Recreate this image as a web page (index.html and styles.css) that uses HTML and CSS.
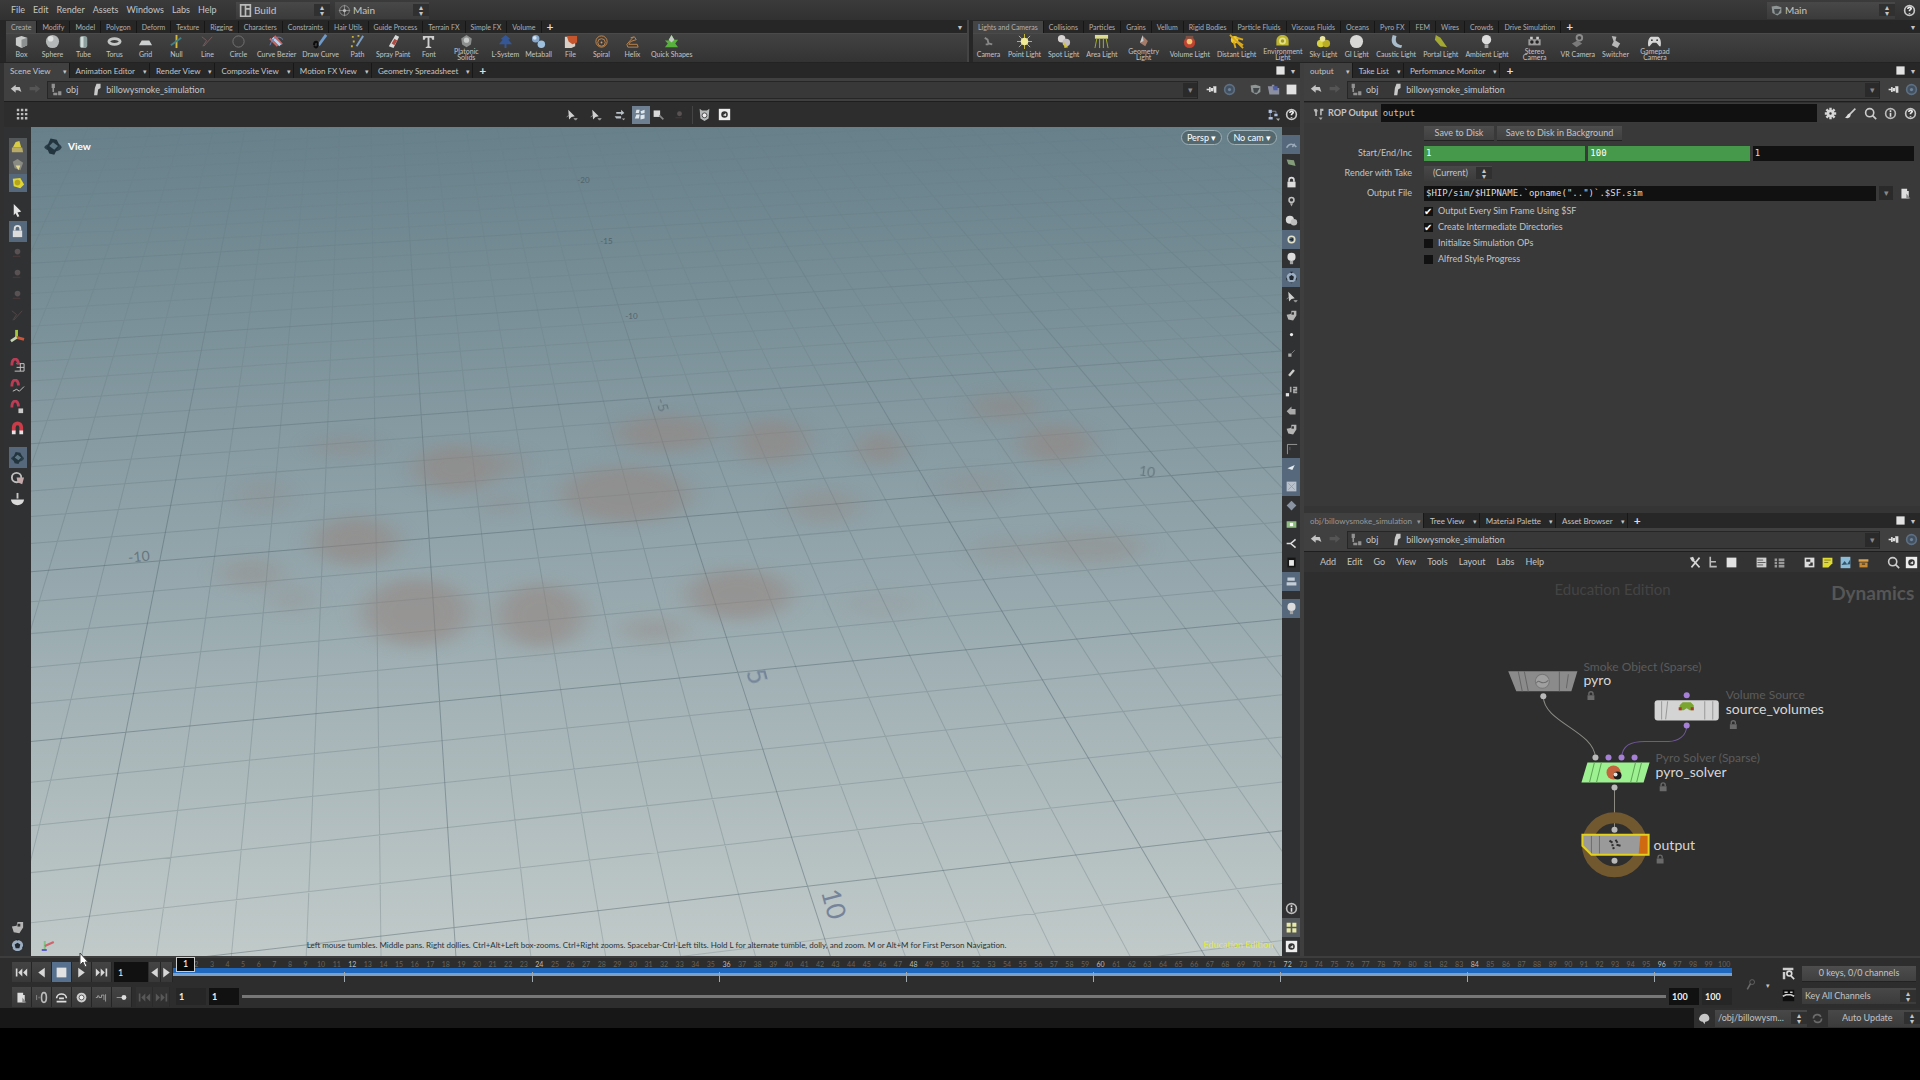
FILE: index.html
```html
<!DOCTYPE html>
<html lang="en">
<head>
    <meta charset="UTF-8">
    <title>billowysmoke_simulation</title>
    <link rel="stylesheet" href="styles.css">
</head>
<body>
    <svg class="sprite" aria-hidden="true">
        <symbol id="box" viewBox="0 0 16 16"><path d="M2 4l6-2 6 2v8l-6 3-6-3z" fill="#c9cbcb"/><path d="M8 6l6-2v8l-6 3z" fill="#8c9090"/></symbol>
        <symbol id="sphere" viewBox="0 0 16 16"><circle cx="8" cy="8" r="7" fill="#b4b8b8"/><circle cx="6" cy="5" r="3" fill="#dfe1e1"/></symbol>
        <symbol id="tube" viewBox="0 0 16 16"><rect x="4" y="2" width="8" height="13" rx="3" fill="#8ea09d"/><rect x="5" y="3" width="3" height="11" fill="#d2dcda"/></symbol>
        <symbol id="torus" viewBox="0 0 16 16"><ellipse cx="8" cy="8" rx="6" ry="3" fill="none" stroke="#c3c5c5" stroke-width="3"/></symbol>
        <symbol id="grid" viewBox="0 0 16 16"><path d="M4 7h8l3 5H1z" fill="#cdd0d0"/></symbol>
        <symbol id="null" viewBox="0 0 16 16"><path d="M8 1v14" stroke="#d5b73a" stroke-width="2"/><path d="M2 12l11-8" stroke="#3e8188" stroke-width="2"/></symbol>
        <symbol id="line" viewBox="0 0 16 16"><path d="M2 3l5 4-4 6M13 3L4 13" fill="none" stroke="#7b5c5c"/></symbol>
        <symbol id="circle" viewBox="0 0 16 16"><circle cx="8" cy="8" r="6" fill="none" stroke="#747474"/></symbol>
        <symbol id="curve" viewBox="0 0 16 16"><path d="M1 5l8 8M6 2l8 9" stroke="#c96565" stroke-width="2"/><path d="M4 4l8 8" stroke="#bccfe8" stroke-width="3"/><path d="M1 12c3-9 10-11 14-6" fill="none" stroke="#6a84c0"/></symbol>
        <symbol id="draw" viewBox="0 0 16 16"><path d="M14 1L6 12" stroke="#6f9ac9" stroke-width="3"/><path d="M1 12c0-5 5-5 4 0-1 4-3 2-4 1" fill="none" stroke="#0c0c0c" stroke-width="2"/></symbol>
        <symbol id="path" viewBox="0 0 16 16"><path d="M14 2L7 13" stroke="#7f9fc2" stroke-width="2"/><path d="M2 2h2v2H2zM8 1h2v2H8zM3 7h2v2H3zM1 12h2v2H1z" fill="#c8b03c"/></symbol>
        <symbol id="spray" viewBox="0 0 16 16"><path d="M10 1l4 2-6 12-5-2z" fill="#d8dada"/><path d="M9 5l3 2-3 5-3-2z" fill="#b04a42"/></symbol>
        <symbol id="font" viewBox="0 0 16 16"><path d="M2 2h12v4h-2l-1-2H9v9l2 1v1H5v-1l2-1V4H5L4 6H2z" fill="#cfcfcf"/></symbol>
        <symbol id="solids" viewBox="0 0 16 16"><path d="M8 1l6 4-1 7-5 3-5-3-1-7z" fill="#8d8f8f"/><circle cx="8" cy="7" r="3" fill="#c8caca"/></symbol>
        <symbol id="lsystem" viewBox="0 0 16 16"><path d="M8 1l5 4-2 1 4 5H9v4H7v-4H1l4-5-2-1z" fill="#365796"/></symbol>
        <symbol id="meta" viewBox="0 0 16 16"><circle cx="5" cy="5" r="4" fill="#86a7ca"/><circle cx="11" cy="11" r="4" fill="#9ec0dd"/><circle cx="4" cy="4" r="2" fill="#d2e2f0"/></symbol>
        <symbol id="file" viewBox="0 0 16 16"><path d="M2 3h11v10l-4 2H2z" fill="#d8cfc6"/><path d="M4 2h11v7l-5 2-4-3z" fill="#c4552d"/></symbol>
        <symbol id="spiral" viewBox="0 0 16 16"><circle cx="8" cy="8" r="6" fill="none" stroke="#c48a50"/><circle cx="8" cy="9" r="4" fill="none" stroke="#c48a50"/><circle cx="8" cy="9" r="1" fill="#dc9e62"/></symbol>
        <symbol id="helix" viewBox="0 0 16 16"><path d="M6 4l4-1 2 3-6 2-2 3h9l1 3H3l-1-3 7-8" fill="none" stroke="#c0864c"/></symbol>
        <symbol id="quick" viewBox="0 0 16 16"><path d="M8 1l3 5h4l-3 4 3 4H1l3-4-3-3h4z" fill="#58b13c"/><path d="M8 1l3 5-3 3-3-3z" fill="#c2c8c2"/></symbol>
        <symbol id="cam" viewBox="0 0 16 16"><path d="M4 4l3 2 1 4 4 1M5 11h3" fill="none" stroke="#888" stroke-width="2"/></symbol>
        <symbol id="sun" viewBox="0 0 16 16"><path d="M8 0v16M0 8h16M2 2l12 12M14 2L2 14" stroke="#c5bb3a"/><circle cx="8" cy="8" r="4" fill="#f0eb94"/></symbol>
        <symbol id="spot" viewBox="0 0 16 16"><circle cx="6" cy="5" r="4" fill="#d9d4d4"/><circle cx="11" cy="9" r="4" fill="#c3bcc0"/><path d="M8 8l5 6-4 1z" fill="#d3c23e"/></symbol>
        <symbol id="area" viewBox="0 0 16 16"><path d="M1 1h14v4H1z" fill="#dcdc90"/><path d="M3 5L1 15M6 5v10M10 5v10M13 5l2 10" stroke="#a6b32e"/></symbol>
        <symbol id="geo" viewBox="0 0 16 16"><path d="M7 2l6 6-3 6-6-4z" fill="#a47b69"/><path d="M7 1l-3 9 4-2z" fill="#c7cacc"/></symbol>
        <symbol id="vol" viewBox="0 0 16 16"><circle cx="8" cy="9" r="6" fill="#bf4332"/><circle cx="8" cy="8" r="3" fill="#f0c470"/><path d="M4 2h8v3H4z" fill="#7c5345"/></symbol>
        <symbol id="distant" viewBox="0 0 16 16"><circle cx="6" cy="6" r="4" fill="#edcb2c"/><path d="M1 1l14 14M8 4l7 2M5 8l2 7M9 8l6 4" stroke="#d8a91e" stroke-width="2"/></symbol>
        <symbol id="env" viewBox="0 0 16 16"><path d="M1 13V8c0-9 14-9 14 0v5z" fill="#bdb52f"/><circle cx="8" cy="8" r="4" fill="#e5e084"/><circle cx="8" cy="8" r="2" fill="#9a9427"/></symbol>
        <symbol id="sky" viewBox="0 0 16 16"><circle cx="5" cy="10" r="4" fill="#d8d23c"/><circle cx="11" cy="10" r="4" fill="#b9ad26"/><circle cx="7" cy="5" r="3" fill="#ece69d"/></symbol>
        <symbol id="gi" viewBox="0 0 16 16"><circle cx="8" cy="8" r="7" fill="#d8d8d6"/></symbol>
        <symbol id="caustic" viewBox="0 0 16 16"><path d="M4 1l4 1c-2 6 0 9 6 10l-1 3C4 14 1 9 4 1z" fill="#a9bccb"/></symbol>
        <symbol id="portal" viewBox="0 0 16 16"><path d="M3 1l5 3 7 10-7-1-6-7z" fill="#a3a932"/></symbol>
        <symbol id="bulb" viewBox="0 0 16 16"><circle cx="8" cy="6" r="5" fill="#dcdcdc"/><path d="M6 11h4v4H6z" fill="#a5a5a5"/></symbol>
        <symbol id="stereo" viewBox="0 0 16 16"><path d="M1 6h14v7H1z" fill="#9d9d9d"/><path d="M3 3h3v3H3zM10 3h3v3h-3z" fill="#ccc"/><circle cx="5" cy="9" r="2" fill="#222"/><circle cx="11" cy="9" r="2" fill="#222"/></symbol>
        <symbol id="vr" viewBox="0 0 16 16"><circle cx="10" cy="4" r="3" fill="none" stroke="#8c8c8c" stroke-width="2"/><path d="M2 10l6-3 5 3-6 4z" fill="#7a7a7a"/></symbol>
        <symbol id="switcher" viewBox="0 0 16 16"><path d="M4 2l5 1-1 4 5 3-3 5-6-3 2-4z" fill="#b7b7b7"/></symbol>
        <symbol id="pad" viewBox="0 0 16 16"><path d="M4 3h8c3 1 4 7 3 11-2 1-3-3-5-4H6c-2 1-3 5-5 4C0 10 1 4 4 3z" fill="#d6d6d6"/><circle cx="5" cy="7" r="1" fill="#333"/><circle cx="11" cy="7" r="1" fill="#333"/></symbol>
        <symbol id="back" viewBox="0 0 16 16"><path d="M1 7l6-5v3h5l2 6-4-2H7v3z" fill="currentColor"/></symbol>
        <symbol id="fwd" viewBox="0 0 16 16"><path d="M15 7L9 2v3H2v4h7v3z" fill="currentColor"/></symbol>
        <symbol id="objnet" viewBox="0 0 16 16"><path d="M2 1h4v5H2zM3 6h2v5H3zM4 12h5v3H4zM10 10h4v5h-4z" fill="#929292"/></symbol>
        <symbol id="dop" viewBox="0 0 16 16"><path d="M8 1h5v5l-3 2-1 7H5l1-9z" fill="#c9c9c9"/></symbol>
        <symbol id="pin" viewBox="0 0 16 16"><path d="M2 8h4M6 5v6" stroke="#ddd" stroke-width="2"/><path d="M7 6h3v4H7zM10 4h4v8h-3z" fill="#ddd"/></symbol>
        <symbol id="ring" viewBox="0 0 16 16"><circle cx="8" cy="8" r="6" fill="#42505f" stroke="#5e7085" stroke-width="2"/><circle cx="8" cy="8" r="2" fill="#6e8299"/></symbol>
        <symbol id="cube" viewBox="0 0 16 16"><path d="M2 3l6-1 6 2v7l-5 3-6-3z" fill="#8f9595"/><path d="M5 6h8l-3 6H6z" fill="#42484a"/></symbol>
        <symbol id="cubeb" viewBox="0 0 16 16"><path d="M1 4h5V2h3v4h6v8H3z" fill="#8c8fa0"/><path d="M7 4h6v5H8z" fill="#4f5fa8"/></symbol>
        <symbol id="square" viewBox="0 0 16 16"><path d="M2 2h12v12H2z" fill="#e2e2e2"/></symbol>
        <symbol id="help" viewBox="0 0 16 16"><circle cx="8" cy="8" r="6" fill="none" stroke="#c8c8c8" stroke-width="2"/><path d="M6 6c0-3 5-2 4 0L8 8v1M8 11v1" fill="none" stroke="#eee" stroke-width="2"/></symbol>
        <symbol id="info" viewBox="0 0 16 16"><circle cx="8" cy="8" r="6" fill="none" stroke="#bbb" stroke-width="2"/><path d="M8 4v2M8 7v5" stroke="#ddd" stroke-width="2"/></symbol>
        <symbol id="gear" viewBox="0 0 16 16"><path d="M8 1v14M1 8h14M3 3l10 10M13 3L3 13" stroke="#d6d6d6" stroke-width="3"/><circle cx="8" cy="8" r="3" fill="#333" stroke="#d6d6d6" stroke-width="3"/></symbol>
        <symbol id="brush" viewBox="0 0 16 16"><path d="M14 2L7 9" stroke="#ccc" stroke-width="2"/><path d="M7 8c-3 0-3 4-6 5 4 2 8 0 7-4z" fill="#ddd"/></symbol>
        <symbol id="search" viewBox="0 0 16 16"><circle cx="7" cy="7" r="5" fill="none" stroke="#ccc" stroke-width="2"/><path d="M10 10l5 5" stroke="#ccc" stroke-width="2"/></symbol>
        <symbol id="dots" viewBox="0 0 16 16"><path d="M1 1h3v3H1zM6 1h3v3H6zM11 1h3v3h-3zM1 6h3v3H1zM6 6h3v3H6zM11 6h3v3h-3zM1 11h3v3H1zM6 11h3v3H6zM11 11h3v3h-3z" fill="#bdbdbd"/></symbol>
        <symbol id="pick" viewBox="0 0 16 16"><path d="M4 2l8 8-4 1-3 3z" fill="#d0d0d0"/><path d="M2 11l3-2M11 13h4l-2 2z" stroke="#999" fill="#999"/></symbol>
        <symbol id="swap" viewBox="0 0 16 16"><path d="M10 2l4 4-4 3V7H4V5h6zM2 10h8v3H4z" fill="#b8c0c8"/><path d="M11 13h4l-2 2z" fill="#aaa"/></symbol>
        <symbol id="geosel" viewBox="0 0 16 16"><path d="M3 2h4l-1 4H2zM8 4l5-2v4l-4 1zM3 8h4l-1 5H1zM8 9l5-1v5l-5 1z" fill="#dfe6ec"/></symbol>
        <symbol id="lens" viewBox="0 0 16 16"><path d="M2 3h8v8H2z" fill="#d8d8d8"/><path d="M9 9l5 5" stroke="#888" stroke-width="2"/></symbol>
        <symbol id="snap" viewBox="0 0 16 16"><path d="M2 1l3 2h6l3-2-1 12-5 3-5-3z" fill="#b5b8b8"/><circle cx="8" cy="9" r="3" fill="#eee" stroke="#333"/></symbol>
        <symbol id="cambox" viewBox="0 0 16 16"><path d="M1 1h14v14H1z" fill="#ededed"/><circle cx="8" cy="8" r="4" fill="#333"/><path d="M6 9l4-3v4z" fill="#ddd"/></symbol>
        <symbol id="nodes" viewBox="0 0 16 16"><path d="M2 2h4v4H2zM2 11h5v3H2zM9 7h4v3H9z" fill="#aebfe0"/><path d="M4 6v5M6 4h5v3" fill="none" stroke="#8490b0"/><path d="M11 13h5l-2 3z" fill="#aaa"/></symbol>
        <symbol id="rop" viewBox="0 0 16 16"><path d="M2 3l3-1 2 2-1 3v4H4V7zM10 2h4v3h-2v5h-2z" fill="#b8b8b8"/><path d="M8 13h5l-2 3z" fill="#aaa"/></symbol>
        <symbol id="objy" viewBox="0 0 16 16"><path d="M6 2l4-1 2 7H3z" fill="#d8cb45"/><path d="M2 8h11l1 5H2z" fill="#b8aa67"/></symbol>
        <symbol id="objg" viewBox="0 0 16 16"><path d="M3 4l5-3 6 4-3 8-6-2z" fill="#8a8b83"/><path d="M6 8h5l-2 5z" fill="#e1d98f"/></symbol>
        <symbol id="dyn" viewBox="0 0 16 16"><path d="M3 3l8-1 4 7-4 4-7-2z" fill="#e0d634"/><circle cx="8" cy="7" r="3" fill="#b5a51c"/></symbol>
        <symbol id="arrow" viewBox="0 0 16 16"><path d="M4 1l8 8-4 1 2 4-2 1-2-4-2 2z" fill="#e4e4e4"/></symbol>
        <symbol id="lock" viewBox="0 0 16 16"><path d="M3 7h10v7H3z" fill="currentColor"/><path d="M5 7V5c0-4 6-4 6 0v2" fill="none" stroke="currentColor" stroke-width="2"/></symbol>
        <symbol id="faint" viewBox="0 0 16 16"><circle cx="8" cy="7" r="3" fill="#5a5252"/><path d="M3 12h8" stroke="#503c3c"/></symbol>
        <symbol id="axes" viewBox="0 0 16 16"><path d="M7 1v9" stroke="#a5c83c" stroke-width="3"/><path d="M7 9l8 2" stroke="#d05538" stroke-width="3"/><path d="M7 9l-6 4" stroke="#c5d4b2" stroke-width="3"/></symbol>
        <symbol id="mgrid" viewBox="0 0 16 16"><path d="M7 6h8v8H5M11 6v8M7 10h8" fill="none" stroke="#cacaca"/><path d="M2 8c0-9 7-9 7-1" fill="none" stroke="#bb3c55" stroke-width="3"/></symbol>
        <symbol id="mcurve" viewBox="0 0 16 16"><path d="M3 13l4-2 3 2 5-5" fill="none" stroke="#cacaca"/><path d="M2 8c0-9 7-9 7-1" fill="none" stroke="#bb3c55" stroke-width="3"/></symbol>
        <symbol id="mpoint" viewBox="0 0 16 16"><path d="M9 9h5v5H9z" fill="#cacaca"/><path d="M2 8c0-9 7-9 7-1" fill="none" stroke="#bb3c55" stroke-width="3"/></symbol>
        <symbol id="magnet" viewBox="0 0 16 16"><path d="M4 11V7c0-6 8-6 8 0v4" fill="none" stroke="#cc3b48" stroke-width="4"/><path d="M2 10h4v4H2zM10 10h4v4h-4z" fill="#e4e4e4"/></symbol>
        <symbol id="tumble" viewBox="0 0 16 16"><path d="M1 9c2-4 12-5 14 0-2 5-12 4-14 0z" fill="#2a3f4a"/><path d="M6 2l5 1 2 4-4 8-4-1-2-5z" fill="#22343e"/><path d="M5 8l3-3 4 3-3 3z" fill="#5c7683"/></symbol>
        <symbol id="render" viewBox="0 0 16 16"><circle cx="7" cy="7" r="5" fill="none" stroke="#bdbdbd" stroke-width="2"/><path d="M7 7h8l-2 7-5-2z" fill="#c4a9ab"/></symbol>
        <symbol id="bowl" viewBox="0 0 16 16"><path d="M1 8h14c-1 8-13 8-14 0z" fill="#dadada"/><path d="M8 1v6" stroke="#c6c6c6" stroke-width="2"/></symbol>
        <symbol id="leaf" viewBox="0 0 16 16"><path d="M2 3l9 1 2 7-9-2z" fill="#859d7a"/></symbol>
        <symbol id="pins" viewBox="0 0 16 16"><circle cx="8" cy="6" r="3" fill="none" stroke="#bfbfbf" stroke-width="2"/><path d="M6 10h4l-2 4z" fill="#aaa"/></symbol>
        <symbol id="target-on" viewBox="0 0 16 16"><circle cx="8" cy="8" r="4" fill="none" stroke="#e0dfc8" stroke-width="2"/><path d="M5 8l5-2v4z" fill="#20272f"/></symbol>
        <symbol id="balls" viewBox="0 0 16 16"><circle cx="6" cy="7" r="5" fill="#d9d9d9"/><circle cx="11" cy="10" r="4" fill="#bdbdbd"/></symbol>
        <symbol id="soccer" viewBox="0 0 16 16"><circle cx="8" cy="8" r="6" fill="#9badc0"/><path d="M8 5l3 2-1 4H6L5 7zM6 1h4l-2 2zM1 7l2 3-1 2zM15 7l-2 3 1 2zM6 14h4l-2 1z" fill="#20272f"/></symbol>
        <symbol id="dot" viewBox="0 0 16 16"><circle cx="8" cy="8" r="2" fill="#eee"/></symbol>
        <symbol id="norm" viewBox="0 0 16 16"><path d="M4 8h4v4H4z" fill="#aaa"/><path d="M8 8l4-4" stroke="#888"/></symbol>
        <symbol id="dash" viewBox="0 0 16 16"><path d="M5 12l6-7" stroke="#ccc" stroke-width="3"/></symbol>
        <symbol id="num" viewBox="0 0 16 16"><path d="M1 10h4v4H1z" fill="#e4e4e4"/><path d="M7 2v7M10 3h4v3h-3v3h4" fill="none" stroke="#a8a8a8" stroke-width="2"/></symbol>
        <symbol id="hand" viewBox="0 0 16 16"><path d="M2 9l6-6v3h5v7H6z" fill="#aaa"/></symbol>
        <symbol id="hulls" viewBox="0 0 16 16"><path d="M2 7l5-1 1-4h6v6l-4 6-6-1z" fill="#b5b5b5"/><path d="M8 4h3v3H8z" fill="#333"/></symbol>
        <symbol id="corner" viewBox="0 0 16 16"><path d="M3 15V3h12" fill="none" stroke="#aaa"/><path d="M6 6v4" stroke="#666"/></symbol>
        <symbol id="shade" viewBox="0 0 16 16"><path d="M3 9l9-4-3 6z" fill="#e3eaf0"/></symbol>
        <symbol id="arc" viewBox="0 0 16 16"><path d="M2 12c3-6 8-5 12-1M9 11l3-4" fill="none" stroke="#9aaabb" stroke-width="2"/></symbol>
        <symbol id="checks" viewBox="0 0 16 16"><path d="M2 2h12v12H2z" fill="#b9c2cc"/><path d="M4 4l8 8M12 4l-8 8" stroke="#8f9ba8"/></symbol>
        <symbol id="diamond" viewBox="0 0 16 16"><path d="M8 2l6 6-6 6-6-6z" fill="#8a93a2"/></symbol>
        <symbol id="card" viewBox="0 0 16 16"><path d="M2 4h12v8H2z" fill="#8fbc80"/><path d="M6 6h4v4H6z" fill="#fff"/></symbol>
        <symbol id="tri" viewBox="0 0 16 16"><path d="M2 8h5l6-5M7 8l6 5" fill="none" stroke="#ddd" stroke-width="2"/></symbol>
        <symbol id="film" viewBox="0 0 16 16"><path d="M3 2h10v12H3z" fill="#161616"/><path d="M5 5h6v7H5z" fill="#e8e8e8"/></symbol>
        <symbol id="stack" viewBox="0 0 16 16"><path d="M3 3h9v4H3zM2 9h12v4H2z" fill="#c3ced8"/></symbol>
        <symbol id="quad" viewBox="0 0 16 16"><path d="M2 2h5v5H2zM9 2h5v5H9zM2 9h5v5H2zM9 9h5v5H9z" fill="#e6eaa6"/></symbol>
        <symbol id="first" viewBox="0 0 16 16"><path d="M1 3h2v10H1zM9 3v10L4 8zM15 3v10l-5-5z" fill="#d8d8d8"/></symbol>
        <symbol id="prev" viewBox="0 0 16 16"><path d="M12 2v12L4 8z" fill="#d8d8d8"/></symbol>
        <symbol id="play" viewBox="0 0 16 16"><path d="M4 2v12l8-6z" fill="#d8d8d8"/></symbol>
        <symbol id="last" viewBox="0 0 16 16"><path d="M13 3h2v10h-2zM7 3v10l5-5zM1 3v10l5-5z" fill="#d8d8d8"/></symbol>
        <symbol id="page" viewBox="0 0 16 16"><path d="M3 2h7v3h2v9H3z" fill="#ddd"/><path d="M9 8l5 6h-5z" fill="#888"/></symbol>
        <symbol id="audio" viewBox="0 0 16 16"><path d="M2 5v6M5 7v2" stroke="#999"/><ellipse cx="11" cy="8" rx="3" ry="6" fill="none" stroke="#bbb" stroke-width="2"/></symbol>
        <symbol id="gauge" viewBox="0 0 16 16"><path d="M2 9c0-7 12-7 12 0M5 9h6M2 13h12" fill="none" stroke="#ddd" stroke-width="2"/></symbol>
        <symbol id="clock" viewBox="0 0 16 16"><circle cx="8" cy="8" r="6" fill="#ccc"/><circle cx="8" cy="8" r="3" fill="#eee" stroke="#444"/></symbol>
        <symbol id="wave" viewBox="0 0 16 16"><path d="M1 8h2V6h2v2h3V5h3v6M13 4v9" fill="none" stroke="#aaa"/></symbol>
        <symbol id="knob" viewBox="0 0 16 16"><path d="M2 8h8" stroke="#aaa"/><circle cx="11" cy="8" r="3" fill="#ddd"/></symbol>
        <symbol id="tools" viewBox="0 0 16 16"><path d="M3 3l10 11M13 2L3 14" stroke="#d5d5d5" stroke-width="2"/><path d="M1 2l4-1 2 4-3 2z" fill="#d5d5d5"/></symbol>
        <symbol id="tree" viewBox="0 0 16 16"><path d="M4 1v12h8M4 7h7" fill="none" stroke="#bbb" stroke-width="2"/></symbol>
        <symbol id="list" viewBox="0 0 16 16"><path d="M2 2h12v12H2z" fill="#cfcfcf"/><path d="M3 5h7M3 8h10M3 11h7" stroke="#444"/></symbol>
        <symbol id="table" viewBox="0 0 16 16"><path d="M2 3h3v3H2zM7 3h7v3H7zM2 7h3v3H2zM7 7h7v3H7zM2 11h3v3H2zM7 11h7v3H7z" fill="#999"/></symbol>
        <symbol id="thumb" viewBox="0 0 16 16"><path d="M2 2h12v12H2z" fill="#ddd"/><path d="M4 4h5v3H4zM9 8h3v4H7v-2h2z" fill="#333"/></symbol>
        <symbol id="note" viewBox="0 0 16 16"><path d="M2 2h12v7l-5 5H2z" fill="#dfdb35"/><path d="M4 5h8M4 8h5" stroke="#777122"/></symbol>
        <symbol id="image" viewBox="0 0 16 16"><path d="M2 1h12v14H2z" fill="#8bbbd6"/><path d="M3 11l4-5 3 4 4-6v6z" fill="#31566c"/></symbol>
        <symbol id="palette" viewBox="0 0 16 16"><path d="M2 4h12v3H2z" fill="#dba24b"/><path d="M3 8h10v6H3z" fill="#c78933"/><path d="M6 9h4v2H6z" fill="#6e4a18"/></symbol>
        <symbol id="keyi" viewBox="0 0 16 16"><circle cx="10" cy="5" r="3" fill="none" stroke="#6a6a6a"/><path d="M8 7l-4 7" stroke="#6a6a6a" stroke-width="2"/></symbol>
        <symbol id="scope" viewBox="0 0 16 16"><path d="M1 1h13v3H1zM1 6h3v9H1z" fill="#ccc"/><circle cx="9" cy="8" r="3" fill="none" stroke="#ddd" stroke-width="2"/><path d="M11 11l4 4" stroke="#ddd" stroke-width="2"/></symbol>
        <symbol id="minus" viewBox="0 0 16 16"><path d="M1 1h14v14H1z" fill="#0e0e0e"/><path d="M1 9l4-2h6l4 2M3 4h4M10 4h3" stroke="#ccc" stroke-width="2" fill="none"/></symbol>
        <symbol id="brain" viewBox="0 0 16 16"><path d="M2 6c3-6 12-5 12 2 0 3-3 4-5 4l-1 3-2-3c-4 0-6-3-4-6z" fill="#c6c6c6"/></symbol>
        <symbol id="cycle" viewBox="0 0 16 16"><path d="M3 8c0-6 8-6 9-2M13 8c0 6-8 6-9 2" fill="none" stroke="#6b6b6b" stroke-width="2"/></symbol>
        <symbol id="layout" viewBox="0 0 16 16"><path d="M2 1h12v14H2zM8 1v14M8 6h6" fill="none" stroke="#bbb" stroke-width="2"/></symbol>
        <symbol id="target" viewBox="0 0 16 16"><circle cx="8" cy="8" r="6" fill="none" stroke="#999"/><path d="M8 1v14M1 8h14" stroke="#999"/><circle cx="8" cy="8" r="2" fill="#bbb"/></symbol>
    </svg>

    <div class="app">
        <header class="menubar">
            <nav class="menu">
                <a href="#">File</a><a href="#">Edit</a><a href="#">Render</a><a href="#">Assets</a><a href="#">Windows</a><a href="#">Labs</a><a href="#">Help</a>
            </nav>
            <label class="pick"><svg class="ic"><use href="#layout"/></svg><select aria-label="Desktop"><option>Build</option></select></label>
            <label class="pick"><svg class="ic"><use href="#target"/></svg><select aria-label="Radial menu"><option>Main</option></select></label>
            <span class="grow"></span>
            <label class="pick pick-wide"><svg class="ic"><use href="#cube"/></svg><select aria-label="Take"><option>Main</option></select></label>
            <button class="tool" aria-label="Help"><svg class="ic"><use href="#help"/></svg></button>
        </header>

        <div class="shelves">
            <section class="shelf">
                <div class="shelf-tabs">
                    <button class="on">Create</button><button>Modify</button><button>Model</button><button>Polygon</button><button>Deform</button><button>Texture</button><button>Rigging</button><button>Characters</button><button>Constraints</button><button>Hair Utils</button><button>Guide Process</button><button>Terrain FX</button><button>Simple FX</button><button>Volume</button><button class="plus">+</button><span class="grow"></span><span class="caret">▼</span>
                </div>
                <div class="shelf-tools">
                    <button><svg><use href="#box"/></svg>Box</button>
                    <button><svg><use href="#sphere"/></svg>Sphere</button>
                    <button><svg><use href="#tube"/></svg>Tube</button>
                    <button><svg><use href="#torus"/></svg>Torus</button>
                    <button><svg><use href="#grid"/></svg>Grid</button>
                    <button><svg><use href="#null"/></svg>Null</button>
                    <button><svg><use href="#line"/></svg>Line</button>
                    <button><svg><use href="#circle"/></svg>Circle</button>
                    <button><svg><use href="#curve"/></svg>Curve Bezier</button>
                    <button><svg><use href="#draw"/></svg>Draw Curve</button>
                    <button><svg><use href="#path"/></svg>Path</button>
                    <button><svg><use href="#spray"/></svg>Spray Paint</button>
                    <button><svg><use href="#font"/></svg>Font</button>
                    <button class="two"><svg><use href="#solids"/></svg>Platonic<br>Solids</button>
                    <button><svg><use href="#lsystem"/></svg>L-System</button>
                    <button><svg><use href="#meta"/></svg>Metaball</button>
                    <button><svg><use href="#file"/></svg>File</button>
                    <button><svg><use href="#spiral"/></svg>Spiral</button>
                    <button><svg><use href="#helix"/></svg>Helix</button>
                    <button><svg><use href="#quick"/></svg>Quick Shapes</button>
                </div>
            </section>
            <section class="shelf">
                <div class="shelf-tabs">
                    <button class="on">Lights and Cameras</button><button>Collisions</button><button>Particles</button><button>Grains</button><button>Vellum</button><button>Rigid Bodies</button><button>Particle Fluids</button><button>Viscous Fluids</button><button>Oceans</button><button>Pyro FX</button><button>FEM</button><button>Wires</button><button>Crowds</button><button>Drive Simulation</button><button class="plus">+</button><span class="grow"></span><span class="caret">▼</span>
                </div>
                <div class="shelf-tools lights">
                    <button><svg><use href="#cam"/></svg>Camera</button>
                    <button><svg><use href="#sun"/></svg>Point Light</button>
                    <button><svg><use href="#spot"/></svg>Spot Light</button>
                    <button><svg><use href="#area"/></svg>Area Light</button>
                    <button class="two"><svg><use href="#geo"/></svg>Geometry<br>Light</button>
                    <button><svg><use href="#vol"/></svg>Volume Light</button>
                    <button><svg><use href="#distant"/></svg>Distant Light</button>
                    <button class="two"><svg><use href="#env"/></svg>Environment<br>Light</button>
                    <button><svg><use href="#sky"/></svg>Sky Light</button>
                    <button><svg><use href="#gi"/></svg>GI Light</button>
                    <button><svg><use href="#caustic"/></svg>Caustic Light</button>
                    <button><svg><use href="#portal"/></svg>Portal Light</button>
                    <button><svg><use href="#bulb"/></svg>Ambient Light</button>
                    <button class="two"><svg><use href="#stereo"/></svg>Stereo<br>Camera</button>
                    <button><svg><use href="#vr"/></svg>VR Camera</button>
                    <button><svg><use href="#switcher"/></svg>Switcher</button>
                    <button class="two"><svg><use href="#pad"/></svg>Gamepad<br>Camera</button>
                </div>
            </section>
        </div>

        <main class="panes">
            <section class="pane scene">
                <div class="tabs">
                    <button class="on">Scene View<i>▾</i></button><button>Animation Editor<i>▾</i></button><button>Render View<i>▾</i></button><button>Composite View<i>▾</i></button><button>Motion FX View<i>▾</i></button><button>Geometry Spreadsheet<i>▾</i></button><button class="plus">+</button><span class="grow"></span><svg class="ic small"><use href="#square"/></svg><span class="caret">▼</span>
                </div>
                <div class="pathbar">
                    <button class="tool" aria-label="Back"><svg class="ic"><use href="#back"/></svg></button>
                    <button class="tool dim" aria-label="Forward"><svg class="ic"><use href="#fwd"/></svg></button>
                    <div class="path"><svg class="ic"><use href="#objnet"/></svg><a href="#">obj</a><svg class="ic"><use href="#dop"/></svg><a href="#">billowysmoke_simulation</a><span class="grow"></span><button class="drop" aria-label="History">▾</button></div>
                    <button class="tool" aria-label="Pin"><svg class="ic"><use href="#pin"/></svg></button>
                    <button class="tool" aria-label="Link"><svg class="ic"><use href="#ring"/></svg></button>
                    <button class="tool first" aria-label="Geometry"><svg class="ic"><use href="#cube"/></svg></button>
                    <button class="tool" aria-label="Objects"><svg class="ic"><use href="#cubeb"/></svg></button>
                    <button class="tool" aria-label="Layout"><svg class="ic"><use href="#square"/></svg></button>
                </div>
                <div class="viewbar">
                    <button class="tool" aria-label="Tools"><svg class="ic"><use href="#dots"/></svg></button>
                    <div class="viewbar-mid">
                        <button class="tool wide" aria-label="Select"><svg class="ic"><use href="#pick"/></svg></button>
                        <button class="tool wide" aria-label="Secure"><svg class="ic"><use href="#pick"/></svg></button>
                        <button class="tool wide" aria-label="Swap"><svg class="ic"><use href="#swap"/></svg></button>
                        <button class="tool on" aria-label="Geometry select"><svg class="ic"><use href="#geosel"/></svg></button>
                        <button class="tool" aria-label="Inspect"><svg class="ic"><use href="#lens"/></svg></button>
                        <button class="tool wide" aria-label="Groups"><svg class="ic"><use href="#faint"/></svg></button>
                        <button class="tool wide sep" aria-label="Snapshot"><svg class="ic"><use href="#snap"/></svg></button>
                        <button class="tool" aria-label="Camera"><svg class="ic"><use href="#cambox"/></svg></button>
                    </div>
                    <div class="viewbar-end">
                        <button class="tool" aria-label="Network"><svg class="ic"><use href="#nodes"/></svg></button>
                        <button class="tool" aria-label="Help"><svg class="ic"><use href="#help"/></svg></button>
                    </div>
                </div>
                <div class="view-row">
                    <div class="side left">
                        <button class="low lit"><svg class="ic"><use href="#objy"/></svg></button>
                        <button class="low lit"><svg class="ic"><use href="#objg"/></svg></button>
                        <button class="low on"><svg class="ic"><use href="#dyn"/></svg></button>
                        <button class="gap"><svg class="ic"><use href="#arrow"/></svg></button>
                        <button class="on"><svg class="ic"><use href="#lock"/></svg></button>
                        <button><svg class="ic"><use href="#faint"/></svg></button>
                        <button><svg class="ic"><use href="#faint"/></svg></button>
                        <button><svg class="ic"><use href="#faint"/></svg></button>
                        <button class="faded"><svg class="ic"><use href="#line"/></svg></button>
                        <button><svg class="ic"><use href="#axes"/></svg></button>
                        <button class="gap"><svg class="ic"><use href="#mgrid"/></svg></button>
                        <button><svg class="ic"><use href="#mcurve"/></svg></button>
                        <button><svg class="ic"><use href="#mpoint"/></svg></button>
                        <button><svg class="ic"><use href="#magnet"/></svg></button>
                        <button class="on gap"><svg class="ic"><use href="#tumble"/></svg></button>
                        <button><svg class="ic"><use href="#render"/></svg></button>
                        <button><svg class="ic"><use href="#bowl"/></svg></button>
                        <span class="grow"></span>
                        <button class="low"><svg class="ic"><use href="#hulls"/></svg></button>
                        <button class="low"><svg class="ic"><use href="#soccer"/></svg></button>
                    </div>
                    <div class="viewport">
                        <svg class="stage" viewBox="30 127 1252 828" preserveAspectRatio="xMidYMid slice">
                            <defs>
                                <linearGradient id="sky-fill" x1="0" y1="0" x2="0" y2="1">
                                    <stop offset="0" stop-color="#67808a"/><stop offset=".5" stop-color="#91a4aa"/><stop offset="1" stop-color="#c1cac9"/>
                                </linearGradient>
                                <linearGradient id="fade" gradientUnits="userSpaceOnUse" x1="0" y1="150" x2="0" y2="520">
                                    <stop offset="0" stop-color="#fff" stop-opacity=".1"/><stop offset="1" stop-color="#fff"/>
                                </linearGradient>
                                <mask id="far" maskUnits="userSpaceOnUse" x="0" y="100" width="1320" height="900"><rect x="0" y="100" width="1320" height="900" fill="url(#fade)"/></mask>
                                <filter id="soft" x="-50%" y="-50%" width="200%" height="200%"><feGaussianBlur stdDeviation="12 7"/></filter>
                            </defs>
                            <rect x="30" y="127" width="1252" height="828" fill="url(#sky-fill)"/>
                            <g mask="url(#far)"><path id="minor" class="minor"/><path id="major" class="major"/></g>
                            <g class="smoke" filter="url(#soft)">
                                <ellipse cx="345" cy="446" rx="34" ry="9" opacity=".6"/>
                                <ellipse cx="456" cy="468" rx="42" ry="23"/>
                                <ellipse cx="505" cy="463" rx="20" ry="13" opacity=".6"/>
                                <ellipse cx="502" cy="504" rx="20" ry="9" opacity=".5"/>
                                <ellipse cx="355" cy="541" rx="42" ry="24"/>
                                <ellipse cx="251" cy="573" rx="30" ry="15" opacity=".6"/>
                                <ellipse cx="292" cy="598" rx="22" ry="14" opacity=".4"/>
                                <ellipse cx="263" cy="496" rx="26" ry="18" opacity=".4"/>
                                <ellipse cx="416" cy="612" rx="54" ry="34"/>
                                <ellipse cx="540" cy="615" rx="44" ry="32"/>
                                <ellipse cx="653" cy="629" rx="32" ry="13" opacity=".6"/>
                                <ellipse cx="738" cy="594" rx="52" ry="25"/>
                                <ellipse cx="625" cy="494" rx="64" ry="28"/>
                                <ellipse cx="665" cy="433" rx="50" ry="18"/>
                                <ellipse cx="771" cy="441" rx="36" ry="22"/>
                                <ellipse cx="823" cy="506" rx="36" ry="17" opacity=".6"/>
                                <ellipse cx="879" cy="448" rx="22" ry="16"/>
                                <ellipse cx="1004" cy="407" rx="34" ry="14" opacity=".8"/>
                                <ellipse cx="1055" cy="443" rx="36" ry="19"/>
                                <ellipse cx="973" cy="485" rx="36" ry="14" opacity=".4"/>
                                <ellipse cx="1088" cy="547" rx="54" ry="16" opacity=".6"/>
                                <ellipse cx="1004" cy="550" rx="34" ry="14" opacity=".4"/>
                                <ellipse cx="880" cy="604" rx="40" ry="14" opacity=".2"/>
                            </g>
                            <g class="marks">
                                <text x="583" y="183" class="tiny">-20</text>
                                <text x="606" y="244" class="tiny">-15</text>
                                <text x="631" y="319" class="tiny">-10</text>
                                <text x="661" y="409" class="mid" transform="rotate(75 661 405)">-5</text>
                                <text x="1146" y="476" class="mid" transform="rotate(8 1146 471)">10</text>
                                <text x="139" y="561" class="mid" transform="rotate(-5 139 556)">-10</text>
                                <text x="755" y="684" class="near" transform="rotate(75 755 676)">5</text>
                                <text x="833" y="912" class="near" transform="rotate(75 833 903)">10</text>
                            </g>
                            <path d="M45 949v-9" stroke="#7fc487" stroke-width="2"/><path d="M45 945l9-4" stroke="#d0646c" stroke-width="2"/><path d="M42 949h5" stroke="#5a5cc8" stroke-width="2"/>
                        </svg>
                        <div class="view-top"><svg class="ic"><use href="#tumble"/></svg><b>View</b><span class="grow"></span><button>Persp ▾</button><button>No cam ▾</button></div>
                        <p class="view-hint">Left mouse tumbles. Middle pans. Right dollies. Ctrl+Alt+Left box-zooms. Ctrl+Right zooms. Spacebar-Ctrl-Left tilts. Hold L for alternate tumble, dolly, and zoom. M or Alt+M for First Person Navigation.</p>
                        <p class="view-edition">Education Edition</p>
                    </div>
                    <div class="side right">
                        <button class="on"><svg class="ic"><use href="#arc"/></svg></button>
                        <button><svg class="ic"><use href="#leaf"/></svg></button>
                        <button><svg class="ic"><use href="#lock"/></svg></button>
                        <button><svg class="ic"><use href="#pins"/></svg></button>
                        <button><svg class="ic"><use href="#balls"/></svg></button>
                        <button class="on"><svg class="ic"><use href="#target-on"/></svg></button>
                        <button><svg class="ic"><use href="#bulb"/></svg></button>
                        <button class="on"><svg class="ic"><use href="#soccer"/></svg></button>
                        <button><svg class="ic"><use href="#pick"/></svg></button>
                        <button><svg class="ic"><use href="#hulls"/></svg></button>
                        <button><svg class="ic"><use href="#dot"/></svg></button>
                        <button><svg class="ic"><use href="#norm"/></svg></button>
                        <button><svg class="ic"><use href="#dash"/></svg></button>
                        <button><svg class="ic"><use href="#num"/></svg></button>
                        <button><svg class="ic"><use href="#hand"/></svg></button>
                        <button><svg class="ic"><use href="#hulls"/></svg></button>
                        <button><svg class="ic"><use href="#corner"/></svg></button>
                        <button class="on"><svg class="ic"><use href="#shade"/></svg></button>
                        <button class="on"><svg class="ic"><use href="#checks"/></svg></button>
                        <button><svg class="ic"><use href="#diamond"/></svg></button>
                        <button><svg class="ic"><use href="#card"/></svg></button>
                        <button><svg class="ic"><use href="#tri"/></svg></button>
                        <button><svg class="ic"><use href="#film"/></svg></button>
                        <button class="on"><svg class="ic"><use href="#stack"/></svg></button>
                        <button class="on gap"><svg class="ic"><use href="#bulb"/></svg></button>
                        <span class="grow"></span>
                        <button><svg class="ic"><use href="#info"/></svg></button>
                        <button class="lit"><svg class="ic"><use href="#quad"/></svg></button>
                        <button><svg class="ic"><use href="#cambox"/></svg></button>
                    </div>
                </div>
            </section>

            <div class="column">
                <section class="pane params">
                    <div class="tabs">
                        <button class="on">output<i>▾</i></button><button>Take List<i>▾</i></button><button>Performance Monitor<i>▾</i></button><button class="plus">+</button><span class="grow"></span><svg class="ic small"><use href="#square"/></svg><span class="caret">▼</span>
                    </div>
                    <div class="pathbar">
                        <button class="tool" aria-label="Back"><svg class="ic"><use href="#back"/></svg></button>
                        <button class="tool dim" aria-label="Forward"><svg class="ic"><use href="#fwd"/></svg></button>
                        <div class="path"><svg class="ic"><use href="#objnet"/></svg><a href="#">obj</a><svg class="ic"><use href="#dop"/></svg><a href="#">billowysmoke_simulation</a><span class="grow"></span><button class="drop" aria-label="History">▾</button></div>
                        <button class="tool" aria-label="Pin"><svg class="ic"><use href="#pin"/></svg></button>
                        <button class="tool" aria-label="Link"><svg class="ic"><use href="#ring"/></svg></button>
                    </div>
                    <div class="rop">
                        <svg class="ic"><use href="#rop"/></svg>
                        <label for="rop-name">ROP Output</label>
                        <input id="rop-name" value="output">
                        <button class="tool" aria-label="Options"><svg class="ic"><use href="#gear"/></svg></button>
                        <button class="tool" aria-label="Brush"><svg class="ic"><use href="#brush"/></svg></button>
                        <button class="tool" aria-label="Search"><svg class="ic"><use href="#search"/></svg></button>
                        <button class="tool" aria-label="Info"><svg class="ic"><use href="#info"/></svg></button>
                        <button class="tool" aria-label="Help"><svg class="ic"><use href="#help"/></svg></button>
                    </div>
                    <form class="fields">
                        <span></span>
                        <div class="line"><button type="button" class="push">Save to Disk</button><button type="button" class="push big">Save to Disk in Background</button></div>
                        <label for="start">Start/End/Inc</label>
                        <div class="line thirds"><input id="start" class="keyed" value="1"><input aria-label="End" class="keyed" value="100"><input aria-label="Inc" value="1"></div>
                        <label for="take">Render with Take</label>
                        <div class="line"><span class="pick take"><select id="take"><option>(Current)</option></select></span></div>
                        <label for="out-file">Output File</label>
                        <div class="line"><input id="out-file" value='$HIP/sim/$HIPNAME.`opname("..")`.$SF.sim'><button type="button" class="drop" aria-label="Expressions">▾</button><button type="button" class="tool" aria-label="Choose file"><svg class="ic"><use href="#page"/></svg></button></div>
                        <label class="tick"><input type="checkbox" checked>Output Every Sim Frame Using $SF</label>
                        <label class="tick"><input type="checkbox" checked>Create Intermediate Directories</label>
                        <label class="tick"><input type="checkbox">Initialize Simulation OPs</label>
                        <label class="tick"><input type="checkbox">Alfred Style Progress</label>
                    </form>
                </section>

                <section class="pane network">
                    <div class="tabs">
                        <button class="on">obj/billowysmoke_simulation<i>▾</i></button><button>Tree View<i>▾</i></button><button>Material Palette<i>▾</i></button><button>Asset Browser<i>▾</i></button><button class="plus">+</button><span class="grow"></span><svg class="ic small"><use href="#square"/></svg><span class="caret">▼</span>
                    </div>
                    <div class="pathbar">
                        <button class="tool" aria-label="Back"><svg class="ic"><use href="#back"/></svg></button>
                        <button class="tool dim" aria-label="Forward"><svg class="ic"><use href="#fwd"/></svg></button>
                        <div class="path"><svg class="ic"><use href="#objnet"/></svg><a href="#">obj</a><svg class="ic"><use href="#dop"/></svg><a href="#">billowysmoke_simulation</a><span class="grow"></span><button class="drop" aria-label="History">▾</button></div>
                        <button class="tool" aria-label="Pin"><svg class="ic"><use href="#pin"/></svg></button>
                        <button class="tool" aria-label="Link"><svg class="ic"><use href="#ring"/></svg></button>
                    </div>
                    <div class="netbar">
                        <nav class="netmenu"><a href="#">Add</a><a href="#">Edit</a><a href="#">Go</a><a href="#">View</a><a href="#">Tools</a><a href="#">Layout</a><a href="#">Labs</a><a href="#">Help</a></nav>
                        <span class="grow"></span>
                        <button class="tool"><svg class="ic"><use href="#tools"/></svg></button>
                        <button class="tool"><svg class="ic"><use href="#tree"/></svg></button>
                        <button class="tool"><svg class="ic"><use href="#square"/></svg></button>
                        <button class="tool first"><svg class="ic"><use href="#list"/></svg></button>
                        <button class="tool"><svg class="ic"><use href="#table"/></svg></button>
                        <button class="tool first"><svg class="ic"><use href="#thumb"/></svg></button>
                        <button class="tool"><svg class="ic"><use href="#note"/></svg></button>
                        <button class="tool"><svg class="ic"><use href="#image"/></svg></button>
                        <button class="tool"><svg class="ic"><use href="#palette"/></svg></button>
                        <button class="tool first"><svg class="ic"><use href="#search"/></svg></button>
                        <button class="tool"><svg class="ic"><use href="#cambox"/></svg></button>
                    </div>
                    <svg class="graph" viewBox="1306 573 613 383">
                        <text x="1613" y="596" class="mark" text-anchor="middle">Education Edition</text>
                        <text x="1914" y="601" class="context" text-anchor="end">Dynamics</text>

                        <path class="wire" d="M1544 697c0 26 50 34 52 61"/>
                        <path class="wire violet" d="M1687 726c0 10-8 16-18 16h-24c-14 0-22 4-23 16"/>
                        <path class="wire" d="M1615 788v42"/>

                        <path d="M1509 672h69l-6 20h-55z" fill="#8b8b8b"/>
                        <path d="M1519 672l4 20M1525 672l4 20M1560 672v20M1569 675l-2 14" stroke="#666" fill="none"/>
                        <circle cx="1543" cy="682" r="7" fill="#a0a0a0" stroke="#777"/><path d="M1537 684c3-6 5 4 12-3" stroke="#6c6c6c" fill="none"/>

                        <rect x="1655" y="701" width="64" height="20" rx="3" fill="#d4d4d4"/>
                        <path d="M1662 702v18M1668 702l-2 18M1705 702v18M1713 702v18" stroke="#999" fill="none"/>
                        <path d="M1680 706l3-3h8l3 3v5h-4l-3-2-3 2h-4z" fill="#7aa52f"/><path d="M1679 708h3v3h-3zM1691 708h3v3h-3z" fill="#a63b28"/>

                        <path d="M1588 763h62l-6 20h-62z" fill="#9df190"/>
                        <path d="M1595 763l-5 20M1602 763l-5 20M1636 763l-5 20M1642 763l-5 20" stroke="#5fa557" fill="none"/>
                        <circle cx="1614" cy="773" r="7" fill="#c4643e"/><circle cx="1618" cy="776" r="4" fill="#1c1c1c"/><circle cx="1616" cy="775" r="2" fill="#e3e3e3"/>

                        <circle cx="1615" cy="845" r="27" fill="none" stroke="#72582f" stroke-width="11"/>
                        <path d="M1583 835h66v20h-57l-9-9z" fill="#9a9a9a"/>
                        <path d="M1641 835h8v20h-10z" fill="#cf6a10"/>
                        <path d="M1592 836v18M1600 836v18" stroke="#6e6e6e"/>
                        <path d="M1583 835h66v20h-57l-9-9z" fill="none" stroke="#e3cf1e" stroke-width="2"/>
                        <path d="M1610 841l3 2M1616 840l2 3M1612 846l2-1M1617 845l4 1M1613 849l2-1" stroke="#303030" stroke-width="2"/>

                        <g fill="#b9b9b9"><circle cx="1544" cy="697" r="3"/><circle cx="1596" cy="758" r="3"/><circle cx="1615" cy="788" r="3"/><circle cx="1615" cy="830" r="3"/><circle cx="1615" cy="861" r="3"/></g>
                        <g fill="#a67fd6"><circle cx="1687" cy="696" r="3"/><circle cx="1687" cy="726" r="3"/><circle cx="1609" cy="758" r="3"/><circle cx="1622" cy="758" r="3"/><circle cx="1635" cy="758" r="3"/></g>

                        <text x="1584" y="672" class="kind">Smoke Object (Sparse)</text><text x="1584" y="686" class="name">pyro</text>
                        <text x="1726" y="700" class="kind">Volume Source</text><text x="1726" y="715" class="name">source_volumes</text>
                        <text x="1656" y="763" class="kind">Pyro Solver (Sparse)</text><text x="1656" y="777" class="name">pyro_solver</text>
                        <text x="1654" y="850" class="name">output</text>
                        <g color="#6a6a6a"><use href="#lock" x="1586" y="691" width="11" height="11"/><use href="#lock" x="1728" y="720" width="11" height="11"/><use href="#lock" x="1658" y="782" width="11" height="11"/><use href="#lock" x="1655" y="854" width="11" height="11"/></g>
                    </svg>
                </section>
            </div>
        </main>

        <footer class="playbar">
            <div class="transport">
                <div class="line">
                    <button aria-label="First frame"><svg class="ic"><use href="#first"/></svg></button><button aria-label="Play back"><svg class="ic"><use href="#prev"/></svg></button><button class="on" aria-label="Stop"><svg class="ic"><use href="#square"/></svg></button><button aria-label="Play"><svg class="ic"><use href="#play"/></svg></button><button aria-label="Last frame"><svg class="ic"><use href="#last"/></svg></button>
                    <input aria-label="Frame" value="1">
                    <button class="slim" aria-label="Step back"><svg class="ic"><use href="#prev"/></svg></button><button class="slim" aria-label="Step"><svg class="ic"><use href="#play"/></svg></button>
                </div>
                <div class="line">
                    <button><svg class="ic"><use href="#page"/></svg></button><button><svg class="ic"><use href="#audio"/></svg></button><button><svg class="ic"><use href="#gauge"/></svg></button><button><svg class="ic"><use href="#clock"/></svg></button><button><svg class="ic"><use href="#wave"/></svg></button><button><svg class="ic"><use href="#knob"/></svg></button>
                    <button class="faded first"><svg class="ic"><use href="#first"/></svg></button><button class="faded"><svg class="ic"><use href="#last"/></svg></button>
                </div>
            </div>
            <div class="time">
                <div class="frames" id="frames"></div>
                <span class="playhead">1</span>
                <div class="range">
                    <input class="plain" aria-label="Global start" value="1"><input aria-label="Range start" value="1">
                    <span class="rail"></span>
                    <input aria-label="Range end" value="100"><input class="plain" aria-label="Global end" value="100">
                </div>
            </div>
            <div class="keys">
                <svg class="ic"><use href="#keyi"/></svg><span class="caret">▾</span>
                <div class="keyrows">
                    <div class="line"><button class="tool"><svg class="ic"><use href="#scope"/></svg></button><button class="push chan">0 keys, 0/0 channels</button></div>
                    <div class="line"><button class="tool"><svg class="ic"><use href="#minus"/></svg></button><label class="pick chan"><select aria-label="Key scope"><option>Key All Channels</option></select></label></div>
                </div>
            </div>
        </footer>
        <div class="status">
            <div class="cook">
                <svg class="ic"><use href="#brain"/></svg>
                <label class="pick"><select aria-label="Cook network"><option>/obj/billowysm...</option></select></label>
                <svg class="ic"><use href="#cycle"/></svg>
                <label class="pick"><select aria-label="Update mode"><option>Auto Update</option></select></label>
            </div>
        </div>
        <svg class="cursor" viewBox="0 0 10 16"><path d="M1 1v12l3-3 2 5 2-1-2-4h3z" fill="#fff" stroke="#444"/></svg>
    </div>
    <script src="script.js"></script>
</body>
</html>
```
FILE: styles.css
```css
* {
    margin: 0;
    padding: 0;
    box-sizing: border-box;
}
body{
    background-color: #000;
    color: #c4c4c4;
    font: 9px/12px Lato, "Open Sans", sans-serif;
    overflow: hidden;
}
button, input, select{
    font: inherit;
    color: inherit;
    background: none;
    border: 0;
    outline: 0;
    appearance: none;
}
a{
    color: inherit;
    text-decoration: none;
}
.sprite{
    position: absolute;
    width: 0;
    height: 0;
}
.ic{
    width: 13px;
    height: 13px;
    flex: none;
    display: block;
}
.ic.small{
    width: 11px;
    height: 11px;
}
.grow{
    flex: 1;
}
.line{
    display: flex;
    align-items: center;
}
.app{
    position: relative;
    display: flex;
    flex-direction: column;
    height: calc(100vh - 52px);
    background-color: #2b2b2b;
}

/* menu bar */
.menubar{
    display: flex;
    align-items: center;
    height: 20px;
    padding: 0 2px 0 11px;
    background: linear-gradient(#3b3b3b, #313131);
}
.menu{
    display: flex;
    gap: 8px;
    width: 225px;
}
.pick{
    position: relative;
    display: flex;
    align-items: center;
    gap: 2px;
    width: 94px;
    height: 17px;
    margin-right: 5px;
    padding-left: 3px;
    background: linear-gradient(#484848, #3b3b3b);
    font-size: 10px;
}
.pick select{
    flex: 1;
    min-width: 0;
}
.pick::after{
    content: "▴\A▾";
    white-space: pre;
    width: 16px;
    text-align: center;
    font-size: 8px;
    line-height: 6px;
    background-color: #303030;
}
.pick-wide{
    width: 128px;
}
.tool{
    display: flex;
    align-items: center;
    justify-content: center;
    width: 18px;
    height: 18px;
    flex: none;
}
.tool.on{
    background-color: #6d7f91;
}
.tool.dim{
    color: #555;
}
.caret{
    width: 14px;
    text-align: center;
    font-size: 7px;
}

/* shelves */
.shelves{
    display: grid;
    grid-template-columns: 967fr 953fr;
    height: 43px;
    border-bottom: 1px solid #232323;
}
.shelf{
    padding: 1px 0 0 6px;
    background-color: #262626;
}
.shelf + .shelf{
    padding-left: 4px;
    border-left: 2px solid #444;
}
.shelf-tabs{
    display: flex;
    align-items: center;
    height: 12px;
}
.shelf-tabs button{
    height: 12px;
    padding: 0 5px;
    border-right: 1px solid #161616;
    font-size: 7px;
    line-height: 12px;
    color: #b0b0b0;
    white-space: nowrap;
}
.shelf-tabs .on{
    background-color: #444;
}
.shelf-tabs .plus, .tabs .plus{
    border: 0;
    font-size: 12px;
    font-weight: bold;
    color: #ddd;
}
.shelf-tools{
    display: flex;
    height: 29px;
    background: linear-gradient(#424242, #333);
    border-top: 1px solid #4a4a4a;
}
.shelf-tools button{
    display: flex;
    flex-direction: column;
    align-items: center;
    min-width: 31px;
    padding: 0 3px;
    font-size: 7px;
    line-height: 11px;
    white-space: nowrap;
}
.shelf-tools svg{
    width: 15px;
    height: 15px;
    flex: none;
}
.shelf-tools .two{
    line-height: 6px;
    min-width: 44px;
}
.shelf-tools .two svg{
    height: 14px;
}
.lights{
    gap: 1px;
}

/* panes */
.panes{
    flex: 1;
    min-height: 0;
    display: grid;
    grid-template-columns: 1304fr 616fr;
}
.pane{
    display: flex;
    flex-direction: column;
    min-height: 0;
    background-color: #393939;
}
.scene{
    border-left: 4px solid #303030;
    border-right: 4px solid #3e3e3e;
}
.tabs{
    display: flex;
    align-items: center;
    height: 15px;
    flex: none;
    background-color: #272727;
    font-size: 8px;
}
.tabs button{
    height: 15px;
    padding: 0 2px 0 6px;
    border-right: 1px solid #181818;
    white-space: nowrap;
}
.tabs button i{
    margin-left: 8px;
    font-size: 7px;
    font-style: normal;
}
.tabs .on{
    background-color: #404040;
}
.tabs .on i{
    margin-left: 12px;
}
.network .tabs .on{
    color: #999;
}
.network .tabs .on i{
    margin-left: 5px;
}
.pathbar{
    display: flex;
    align-items: center;
    height: 24px;
    flex: none;
    padding: 0 0 0 3px;
    background-color: #404040;
    border-bottom: 1px solid #1e1e1e;
}
.path{
    display: flex;
    align-items: center;
    flex: 1;
    gap: 4px;
    height: 18px;
    margin-left: 4px;
    margin-right: 4px;
    padding-left: 2px;
    background-color: #383838;
    border: 1px solid #262626;
}
.path a + .ic{
    margin-left: 8px;
}
.path .ic + a{
    margin-left: -1px;
}
.drop{
    width: 14px;
    height: 14px;
    background-color: #2a2a2a;
    color: #888;
}
.tool.first{
    margin-left: 12px;
}
.pathbar .first{
    margin-left: 8px;
}
.viewbar{
    display: grid;
    grid-template-columns: 1fr auto 1fr;
    align-items: center;
    height: 25px;
    flex: none;
    padding: 0 0 0 9px;
    background-color: #2d2d2d;
}
.viewbar-mid, .viewbar-end{
    display: flex;
    align-items: center;
}
.viewbar-mid{
    padding-right: 20px;
}
.viewbar-end{
    justify-content: flex-end;
}
.viewbar .wide{
    width: 24px;
}
.tool.sep{
    border-left: 1px solid #444;
}
.view-row{
    flex: 1;
    min-height: 0;
    display: flex;
}
.side{
    display: flex;
    flex-direction: column;
    align-items: center;
    flex: none;
    background-color: #303133;
}
.side button{
    display: flex;
    align-items: center;
    justify-content: center;
    flex: none;
    width: 18px;
    height: 19px;
    color: #dcdcdc;
}
.side .gap{
    margin-top: 8px;
}
.side .on{
    background-color: #55687c;
}
.side .lit{
    background-color: #55585a;
}
.side .faded{
    opacity: .5;
}
.left{
    width: 27px;
    padding: 11px 0 2px;
}
.left button{
    height: 21px;
}
.left .ic{
    width: 15px;
    height: 15px;
}
.left .low{
    height: 18px;
}
.right{
    width: 18px;
    padding-top: 8px;
}
.viewport{
    position: relative;
    flex: 1;
    min-width: 0;
    overflow: hidden;
    background-color: #91a4aa;
}
.stage{
    position: absolute;
    inset: 0;
    width: 100%;
    height: 100%;
}
.minor, .major{
    fill: none;
    stroke: #50656e;
}
.minor{
    opacity: .26;
}
.major{
    opacity: .46;
}
.smoke{
    fill: #94827c;
    opacity: .52;
}
.marks{
    fill: #66767f;
    text-anchor: middle;
}
.tiny{
    font-size: 8px;
    fill: #50646d;
}
.mid{
    font-size: 14px;
}
.near{
    font-size: 26px;
    fill: #75849a;
}
.view-top{
    position: absolute;
    inset: 3px 5px auto 12px;
    display: flex;
    align-items: flex-start;
    gap: 5px;
    color: #fff;
}
.view-top .ic{
    width: 20px;
    height: 20px;
    margin-top: 6px;
}
.view-top b{
    margin-top: 10px;
    font-size: 10px;
}
.view-top button{
    padding: 0 5px;
    border: 1px solid #9fb0b6;
    border-radius: 8px;
    background-color: #54686f;
    line-height: 13px;
}
.view-hint{
    position: absolute;
    inset: auto 0 5px;
    text-align: center;
    font-size: 8px;
    color: #2c3335;
}
.view-edition{
    position: absolute;
    right: 9px;
    bottom: 5px;
    color: #e2e83c;
}

/* parameter pane */
.column{
    display: flex;
    flex-direction: column;
    min-height: 0;
}
.params{
    height: 450px;
    flex: none;
    border-bottom: 7px solid #353535;
}
.rop{
    display: flex;
    align-items: center;
    height: 21px;
    flex: none;
    padding: 0 0 0 8px;
    background-color: #3b3b3b;
    border-top: 1px solid #303030;
    font-weight: bold;
}
.rop label{
    margin-left: 3px;
}
.rop input{
    flex: 1;
    height: 18px;
    margin: 0 3px;
    padding-left: 2px;
    background-color: #111;
    font: 9px "DejaVu Sans Mono", monospace;
}
.rop .tool{
    width: 20px;
}
.fields{
    display: grid;
    grid-template-columns: 108px 1fr;
    column-gap: 12px;
    align-items: center;
    padding-right: 6px;
}
.fields > label{
    text-align: right;
}
.fields .line{
    height: 20px;
    gap: 3px;
}
.fields .line > input{
    flex: 1;
    min-width: 0;
    height: 15px;
    padding-left: 2px;
    background-color: #111;
    font: 9px "DejaVu Sans Mono", monospace;
    color: #ddd;
}
.fields .thirds > .keyed{
    background-color: #46994a;
    color: #fff;
}
.push{
    height: 15px;
    width: 70px;
    background: linear-gradient(#4d4d4d, #404040);
    border-bottom: 1px solid #222;
}
.push.big{
    width: 125px;
}
.pick.take{
    width: 68px;
    height: 15px;
    font-size: 9px;
    padding-left: 9px;
}
.fields .tick{
    grid-column: 2;
    display: flex;
    align-items: center;
    gap: 5px;
    height: 16px;
    text-align: left;
}
.tick input{
    width: 9px;
    height: 9px;
    background-color: #111;
}
.tick input:checked::before{
    content: "✔";
    display: block;
    font-size: 10px;
    line-height: 9px;
    color: #fff;
}

/* network editor */
.network{
    flex: 1;
    background-color: #2e2e2e;
}
.netbar{
    display: flex;
    align-items: center;
    height: 20px;
    flex: none;
    padding: 0 0 0 16px;
    background-color: #333;
}
.netmenu{
    display: flex;
    gap: 11px;
}
.graph{
    flex: 1;
    min-height: 0;
    width: 100%;
}
.mark{
    font-size: 15px;
    fill: #444;
}
.context{
    font-size: 19px;
    font-weight: bold;
    fill: #565656;
}
.kind{
    font-size: 12px;
    fill: #5c5c5c;
}
.name{
    font-size: 14px;
    fill: #d6d6d6;
}
.wire{
    fill: none;
    stroke: #8b8b84;
}
.violet{
    stroke: #6f5896;
}

/* play bar */
.playbar{
    display: flex;
    height: 52px;
    flex: none;
    padding: 3px 4px 0 12px;
    background-color: #2d2d2d;
    border-top: 2px solid #3d3d3d;
}
.transport{
    width: 161px;
    flex: none;
}
.transport .line{
    height: 22px;
}
.transport .line + .line{
    height: 20px;
    margin-top: 4px;
}
.transport button{
    display: flex;
    align-items: center;
    justify-content: center;
    width: 20px;
    height: 20px;
    background: linear-gradient(#444, #383838);
    border-right: 1px solid #252525;
}
.transport .on{
    background: #56708e;
}
.transport .slim{
    width: 12px;
}
.transport .faded{
    width: 17px;
    opacity: .25;
}
.transport .faded.first{
    margin-left: 4px;
}
.transport input{
    width: 34px;
    height: 20px;
    margin: 0 1px 0 2px;
    padding-left: 4px;
    background-color: #111;
    color: #eee;
}
.time{
    position: relative;
    flex: 1;
    min-width: 0;
}
.frames{
    position: relative;
    display: grid;
    grid-template-columns: repeat(100, 1fr);
    height: 25px;
}
.frame{
    font-size: 7px;
    line-height: 7px;
    text-align: center;
    color: #68645c;
}
.frame::after{
    content: "";
    display: block;
    height: 8px;
    background: linear-gradient(#2068bd 65%, #7ba0c8 65%);
}
.beat{
    color: #bbb;
}
.tickmark{
    position: absolute;
    top: 11px;
    width: 1px;
    height: 10px;
    background-color: #a0a8b0;
}
.playhead{
    position: absolute;
    left: 3px;
    top: -4px;
    width: 19px;
    height: 15px;
    background-color: #080808;
    border: 1px solid #ccc;
    color: #fff;
    text-align: center;
}
.range{
    display: flex;
    align-items: center;
    gap: 3px;
    height: 20px;
    margin-left: 3px;
}
.range input{
    width: 30px;
    height: 17px;
    padding-left: 3px;
    background-color: #111;
    color: #eee;
    font-weight: bold;
}
.range .plain{
    background-color: #262626;
}
.rail{
    flex: 1;
    height: 3px;
    background-color: #777;
}
.keys{
    display: flex;
    align-items: center;
    gap: 4px;
    width: 184px;
    padding-left: 12px;
    flex: none;
}
.keyrows{
    flex: 1;
}
.keyrows .line{
    height: 22px;
    gap: 5px;
}
.keyrows .chan{
    flex: 1;
    height: 16px;
    margin: 0;
    font-size: 9px;
}
.status{
    display: flex;
    justify-content: flex-end;
    height: 20px;
    flex: none;
    background-color: #171717;
}
.cook{
    display: flex;
    align-items: center;
    gap: 4px;
    padding-left: 4px;
    background-color: #2f2f2f;
}
.cook .pick{
    width: 92px;
    margin-right: 0;
    font-size: 9px;
}
.cook .pick + .ic + .pick{
    padding-left: 14px;
}
.cursor{
    position: absolute;
    left: 79px;
    top: 952px;
    width: 10px;
    height: 16px;
}
```
FILE: script.js
```js
// ground plane point -> viewport
function ground(x, z){
    var w = 1 + 0.00427 * x - 0.0272 * z;
    return ((53.34 * x - 9.9 * z + 686.4) / w).toFixed(1) + ' ' + ((516 - 2.05 * x + 12.85 * z) / w).toFixed(1);
}
var minor = '';
var major = '';
for(var x = -24; x <= 34; x++){
    var d = 'M' + ground(x, -34) + 'L' + ground(x, 16);
    if(x % 5 == 0){ major += d; } else { minor += d; }
}
for(var z = -34; z <= 16; z++){
    var e = 'M' + ground(-26, z) + 'L' + ground(36, z);
    if(z % 5 == 0){ major += e; } else { minor += e; }
}
document.getElementById('minor').setAttribute('d', minor);
document.getElementById('major').setAttribute('d', major);

// frame numbers on the timeline
var frames = document.getElementById('frames');
for(var n = 1; n <= 100; n++){
    var cell = document.createElement('div');
    cell.className = n % 12 == 0 ? 'frame beat' : 'frame';
    cell.textContent = n;
    frames.appendChild(cell);
    if(n % 12 == 0){
        var mark = document.createElement('span');
        mark.className = 'tickmark';
        mark.style.left = n - 1 + '%';
        frames.appendChild(mark);
    }
}
```
